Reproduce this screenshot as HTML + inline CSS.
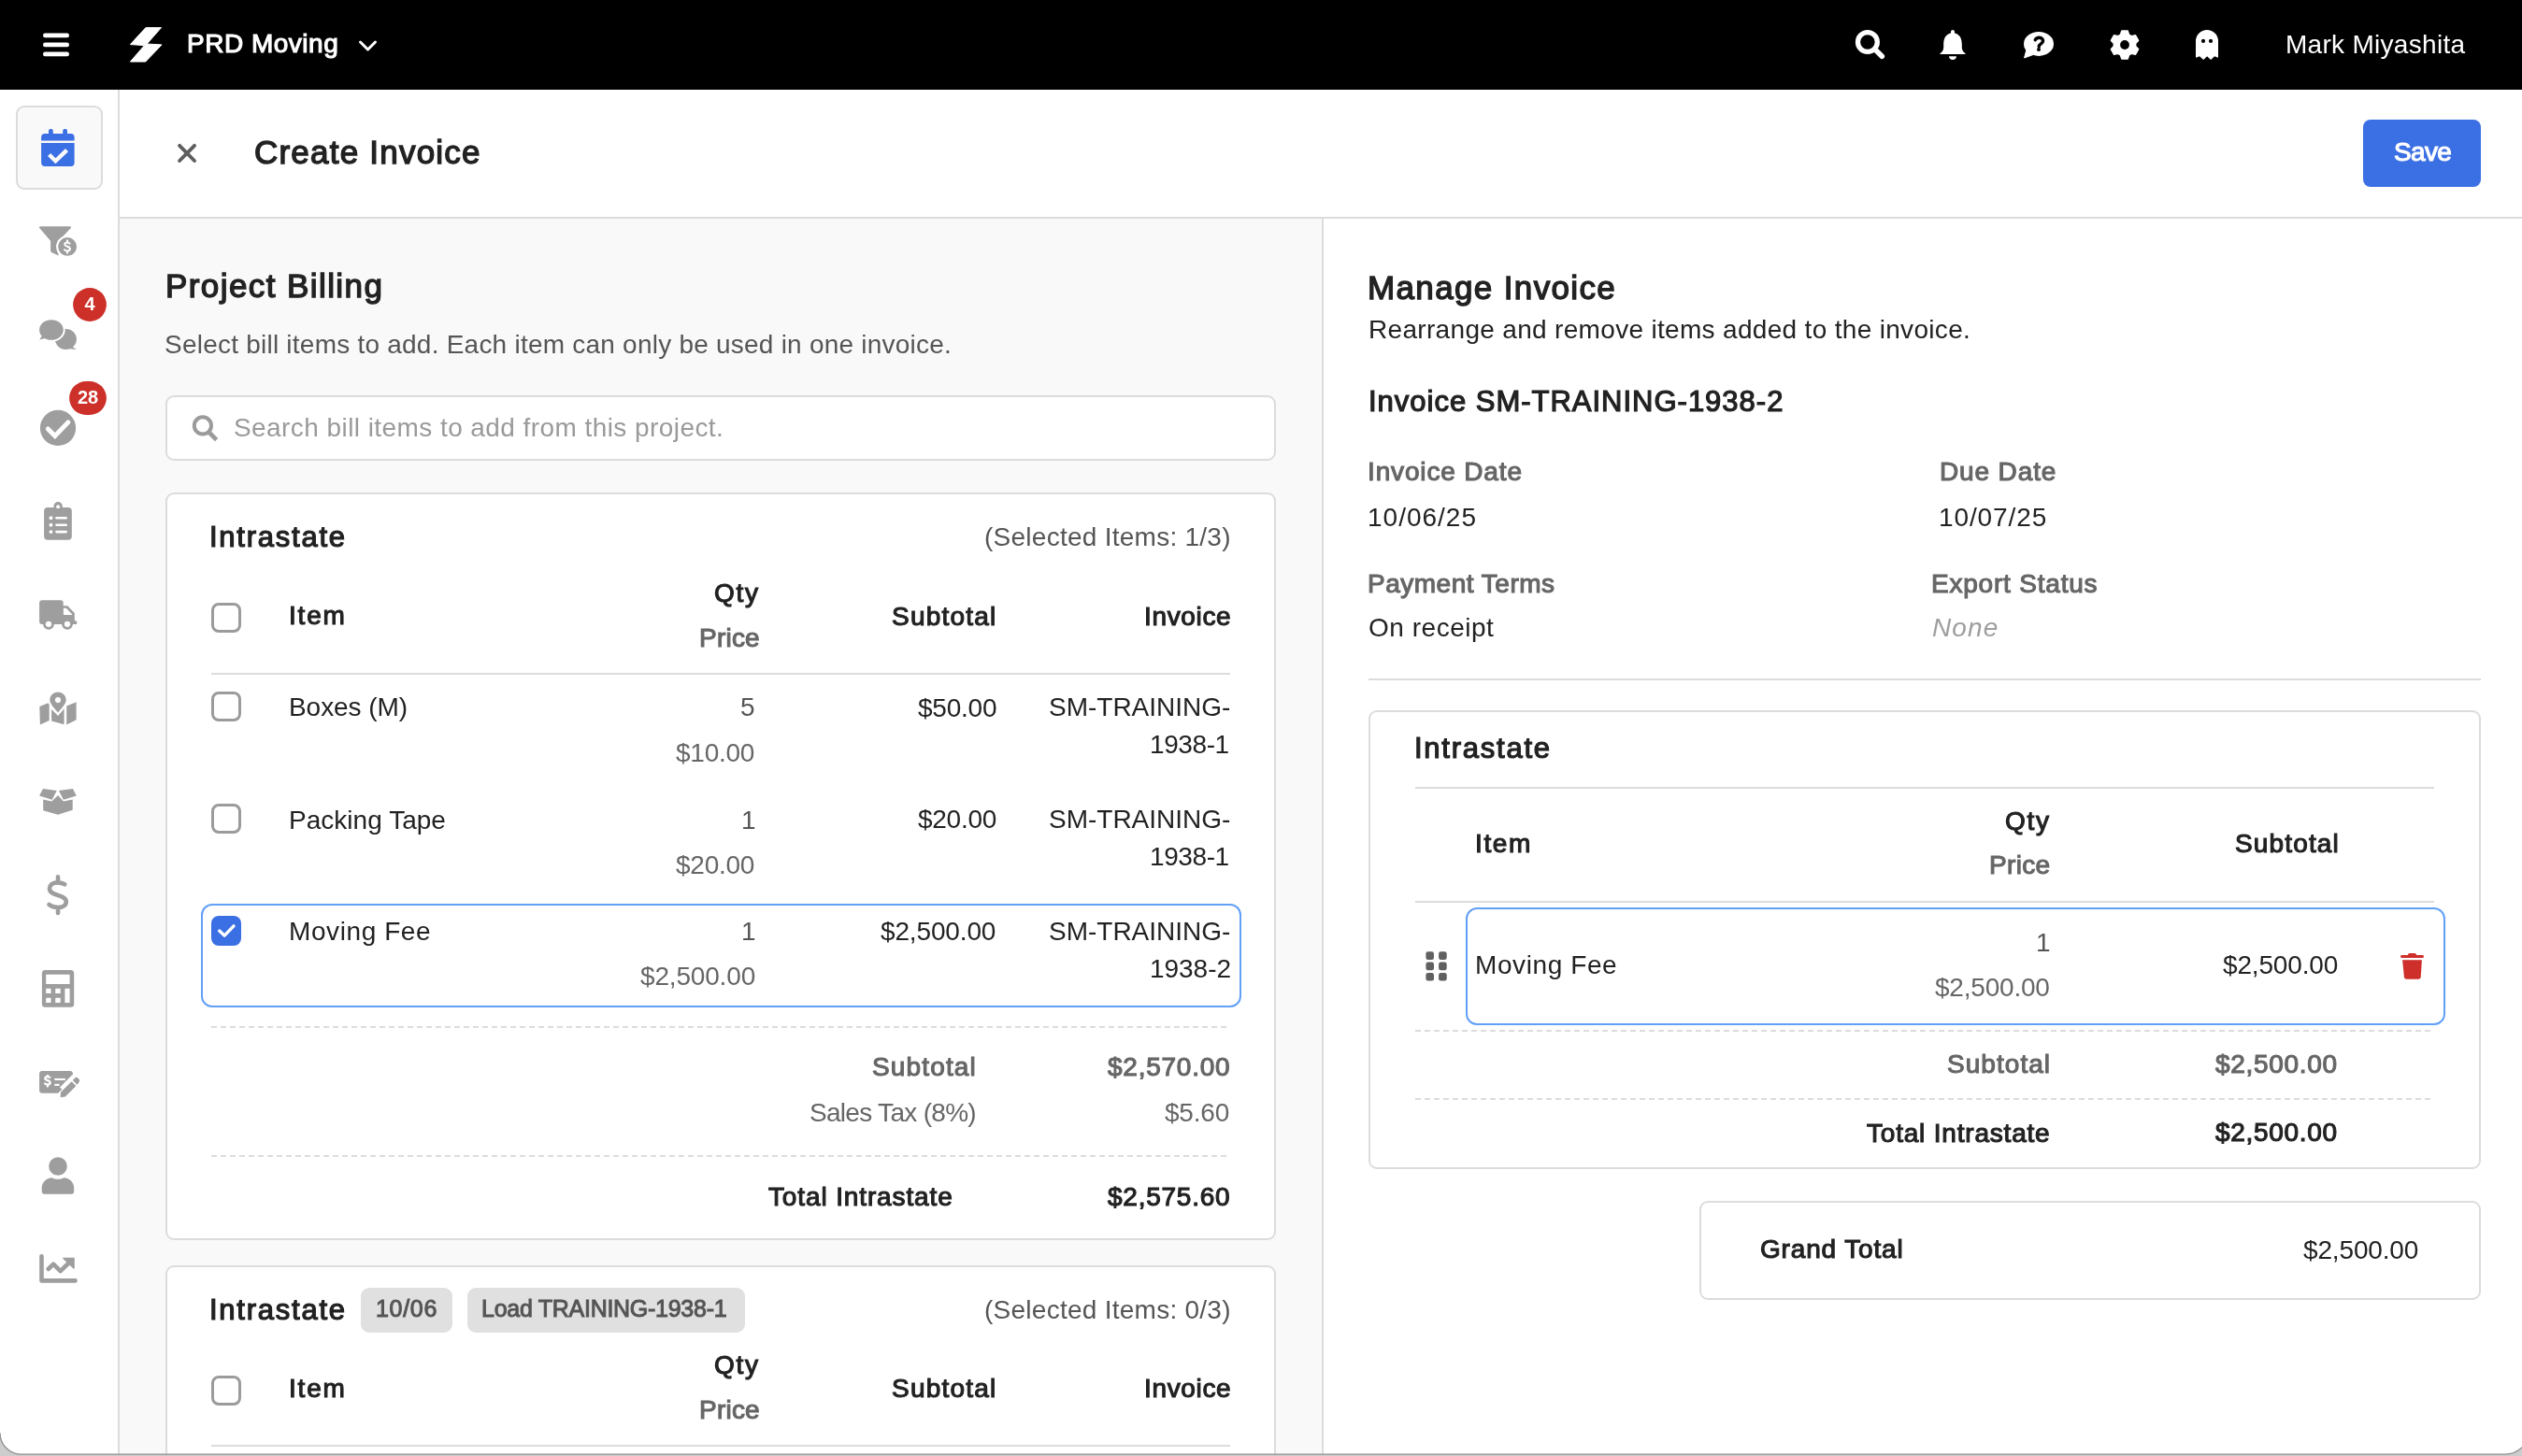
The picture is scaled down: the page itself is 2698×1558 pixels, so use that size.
<!DOCTYPE html>
<html><head><meta charset="utf-8"><style>
html,body{margin:0;padding:0;width:2698px;height:1558px;overflow:hidden;background:#fff;}
body{position:relative;font-family:"Liberation Sans",sans-serif;}
.t{position:absolute;white-space:nowrap;will-change:transform;}
svg{display:block}
</style></head><body>
<div style="position:absolute;left:0px;top:0px;width:2698px;height:96px;box-sizing:border-box;background:#000"></div>
<div style="position:absolute;left:0px;top:96px;width:128px;height:1462px;box-sizing:border-box;background:#fff;border-right:2px solid #dcdcdc"></div>
<div style="position:absolute;left:128px;top:96px;width:2570px;height:138px;box-sizing:border-box;background:#fff;border-bottom:2px solid #dcdcdc"></div>
<div style="position:absolute;left:128px;top:234px;width:1288px;height:1324px;box-sizing:border-box;background:#f9f9f9;border-right:2px solid #dcdcdc"></div>
<div style="position:absolute;left:1416px;top:234px;width:1282px;height:1324px;box-sizing:border-box;background:#fff"></div>
<div style="position:absolute;left:17px;top:113px;width:93px;height:90px;box-sizing:border-box;background:#f9f9f9;border:2px solid #dcdcdc;border-radius:9px"></div>
<div class="t" style="left:200.4px;top:32.8px;font-size:28px;line-height:28px;font-weight:400;font-style:normal;color:#fff;letter-spacing:0.51px;-webkit-text-stroke:1.12px #fff;">PRD Moving</div>
<div class="t" style="left:2444.5px;top:33.9px;font-size:28px;line-height:28px;font-weight:400;font-style:normal;color:#fff;letter-spacing:0.29px;">Mark Miyashita</div>
<div class="t" style="left:272.1px;top:144.7px;font-size:35px;line-height:35px;font-weight:400;font-style:normal;color:#222222;letter-spacing:1.22px;-webkit-text-stroke:1.4px #222222;">Create Invoice</div>
<div style="position:absolute;left:2528px;top:128px;width:126px;height:72px;box-sizing:border-box;background:#3b6fe4;border-radius:8px"></div>
<div class="t" style="left:2561.0px;top:149.1px;font-size:28px;line-height:28px;font-weight:400;font-style:normal;color:#fff;letter-spacing:-0.67px;-webkit-text-stroke:1.12px #fff;">Save</div>
<div class="t" style="left:176.6px;top:288.4px;font-size:35px;line-height:35px;font-weight:400;font-style:normal;color:#222222;letter-spacing:1.42px;-webkit-text-stroke:1.4px #222222;">Project Billing</div>
<div class="t" style="left:176.0px;top:355.3px;font-size:28px;line-height:28px;font-weight:400;font-style:normal;color:#555555;letter-spacing:0.23px;">Select bill items to add. Each item can only be used in one invoice.</div>
<div style="position:absolute;left:177px;top:423px;width:1188px;height:70px;box-sizing:border-box;background:#fff;border:2px solid #dcdcdc;border-radius:9px"></div>
<div class="t" style="left:250.0px;top:444.3px;font-size:28px;line-height:28px;font-weight:400;font-style:normal;color:#9a9a9a;letter-spacing:0.43px;">Search bill items to add from this project.</div>
<div style="position:absolute;left:177px;top:527px;width:1188px;height:800px;box-sizing:border-box;background:#fff;border:2px solid #dcdcdc;border-radius:9px"></div>
<div class="t" style="left:224.2px;top:559.4px;font-size:31px;line-height:31px;font-weight:400;font-style:normal;color:#222222;letter-spacing:1.76px;-webkit-text-stroke:1.24px #222222;">Intrastate</div>
<div class="t" style="left:1053.3px;top:561.1px;font-size:28px;line-height:28px;font-weight:400;font-style:normal;color:#555555;letter-spacing:0.26px;">(Selected Items: 1/3)</div>
<div style="position:absolute;left:226px;top:645px;width:32px;height:32px;box-sizing:border-box;background:#fff;border:3px solid #9b9b9b;border-radius:8px"></div>
<div class="t" style="left:308.6px;top:645.3px;font-size:28px;line-height:28px;font-weight:400;font-style:normal;color:#222222;letter-spacing:1.83px;-webkit-text-stroke:1.12px #222222;">Item</div>
<div class="t" style="left:764.1px;top:620.7px;font-size:28px;line-height:28px;font-weight:400;font-style:normal;color:#222222;letter-spacing:1.69px;-webkit-text-stroke:1.12px #222222;">Qty</div>
<div class="t" style="left:747.6px;top:668.7px;font-size:28px;line-height:28px;font-weight:400;font-style:normal;color:#666666;letter-spacing:0.22px;-webkit-text-stroke:1.12px #666666;">Price</div>
<div class="t" style="left:954.0px;top:645.5px;font-size:28px;line-height:28px;font-weight:400;font-style:normal;color:#222222;letter-spacing:1.20px;-webkit-text-stroke:1.12px #222222;">Subtotal</div>
<div class="t" style="left:1223.8px;top:645.5px;font-size:28px;line-height:28px;font-weight:400;font-style:normal;color:#222222;letter-spacing:0.65px;-webkit-text-stroke:1.12px #222222;">Invoice</div>
<div style="position:absolute;left:226px;top:720px;width:1090px;height:2px;box-sizing:border-box;background:#dcdcdc"></div>
<div class="t" style="left:308.7px;top:743.0px;font-size:28px;line-height:28px;font-weight:400;font-style:normal;color:#222222;letter-spacing:-0.06px;">Boxes (M)</div>
<div class="t" style="left:792.0px;top:743.0px;font-size:28px;line-height:28px;font-weight:400;font-style:normal;color:#555555;letter-spacing:0.00px;">5</div>
<div class="t" style="left:723.4px;top:791.6px;font-size:28px;line-height:28px;font-weight:400;font-style:normal;color:#666666;letter-spacing:-0.24px;">$10.00</div>
<div class="t" style="left:981.6px;top:743.5px;font-size:28px;line-height:28px;font-weight:400;font-style:normal;color:#222222;letter-spacing:-0.22px;">$50.00</div>
<div class="t" style="left:1122.3px;top:743.3px;font-size:28px;line-height:28px;font-weight:400;font-style:normal;color:#222222;letter-spacing:-0.01px;">SM-TRAINING-</div>
<div class="t" style="left:1229.6px;top:783.1px;font-size:28px;line-height:28px;font-weight:400;font-style:normal;color:#222222;letter-spacing:-0.40px;">1938-1</div>
<div style="position:absolute;left:226px;top:740px;width:32px;height:32px;box-sizing:border-box;background:#fff;border:3px solid #9b9b9b;border-radius:8px"></div>
<div class="t" style="left:308.7px;top:864.0px;font-size:28px;line-height:28px;font-weight:400;font-style:normal;color:#222222;letter-spacing:0.03px;">Packing Tape</div>
<div class="t" style="left:793.0px;top:864.0px;font-size:28px;line-height:28px;font-weight:400;font-style:normal;color:#555555;letter-spacing:0.00px;">1</div>
<div class="t" style="left:723.4px;top:911.5px;font-size:28px;line-height:28px;font-weight:400;font-style:normal;color:#666666;letter-spacing:-0.24px;">$20.00</div>
<div class="t" style="left:981.6px;top:863.2px;font-size:28px;line-height:28px;font-weight:400;font-style:normal;color:#222222;letter-spacing:-0.26px;">$20.00</div>
<div class="t" style="left:1122.3px;top:863.2px;font-size:28px;line-height:28px;font-weight:400;font-style:normal;color:#222222;letter-spacing:-0.01px;">SM-TRAINING-</div>
<div class="t" style="left:1229.6px;top:903.0px;font-size:28px;line-height:28px;font-weight:400;font-style:normal;color:#222222;letter-spacing:-0.40px;">1938-1</div>
<div style="position:absolute;left:226px;top:860px;width:32px;height:32px;box-sizing:border-box;background:#fff;border:3px solid #9b9b9b;border-radius:8px"></div>
<div style="position:absolute;left:215px;top:967px;width:1112.5px;height:110.5px;box-sizing:border-box;border:2px solid #62a0f6;border-radius:12px"></div>
<div class="t" style="left:308.7px;top:982.8px;font-size:28px;line-height:28px;font-weight:400;font-style:normal;color:#222222;letter-spacing:0.59px;">Moving Fee</div>
<div class="t" style="left:793.0px;top:982.8px;font-size:28px;line-height:28px;font-weight:400;font-style:normal;color:#555555;letter-spacing:0.00px;">1</div>
<div class="t" style="left:684.6px;top:1030.8px;font-size:28px;line-height:28px;font-weight:400;font-style:normal;color:#666666;letter-spacing:-0.17px;">$2,500.00</div>
<div class="t" style="left:942.4px;top:982.5px;font-size:28px;line-height:28px;font-weight:400;font-style:normal;color:#222222;letter-spacing:-0.14px;">$2,500.00</div>
<div class="t" style="left:1122.3px;top:982.5px;font-size:28px;line-height:28px;font-weight:400;font-style:normal;color:#222222;letter-spacing:-0.01px;">SM-TRAINING-</div>
<div class="t" style="left:1229.6px;top:1022.9px;font-size:28px;line-height:28px;font-weight:400;font-style:normal;color:#222222;letter-spacing:-0.04px;">1938-2</div>
<div style="position:absolute;left:226px;top:980px;width:32px;height:32px;box-sizing:border-box;background:#3b6fe4;border-radius:8px"></div>
<svg style="position:absolute;left:226px;top:980px" width="32" height="32"><polyline points="8.7,16.1 14.1,21.1 24,10.9" fill="none" stroke="#fff" stroke-width="3.4" stroke-linecap="round" stroke-linejoin="round"/></svg>
<svg style="position:absolute;left:226px;top:1098px" width="1090" height="2"><line x1="0" y1="1" x2="1090" y2="1" stroke="#dcdcdc" stroke-width="2" stroke-dasharray="6 4"/></svg>
<div class="t" style="left:933.0px;top:1128.3px;font-size:28px;line-height:28px;font-weight:400;font-style:normal;color:#666666;letter-spacing:1.15px;-webkit-text-stroke:1.12px #666666;">Subtotal</div>
<div class="t" style="left:1184.6px;top:1128.3px;font-size:28px;line-height:28px;font-weight:400;font-style:normal;color:#666666;letter-spacing:0.76px;-webkit-text-stroke:1.12px #666666;">$2,570.00</div>
<div class="t" style="left:865.7px;top:1177.2px;font-size:28px;line-height:28px;font-weight:400;font-style:normal;color:#666666;letter-spacing:-0.70px;">Sales Tax (8%)</div>
<div class="t" style="left:1246.0px;top:1177.2px;font-size:28px;line-height:28px;font-weight:400;font-style:normal;color:#666666;letter-spacing:-0.20px;">$5.60</div>
<svg style="position:absolute;left:226px;top:1236px" width="1090" height="2"><line x1="0" y1="1" x2="1090" y2="1" stroke="#dcdcdc" stroke-width="2" stroke-dasharray="6 4"/></svg>
<div class="t" style="left:821.8px;top:1266.5px;font-size:28px;line-height:28px;font-weight:400;font-style:normal;color:#222222;letter-spacing:0.87px;-webkit-text-stroke:1.12px #222222;">Total Intrastate</div>
<div class="t" style="left:1184.6px;top:1266.5px;font-size:28px;line-height:28px;font-weight:400;font-style:normal;color:#222222;letter-spacing:0.76px;-webkit-text-stroke:1.12px #222222;">$2,575.60</div>
<div style="position:absolute;left:177px;top:1354px;width:1188px;height:246px;box-sizing:border-box;background:#fff;border:2px solid #dcdcdc;border-radius:9px"></div>
<div class="t" style="left:224.2px;top:1385.8px;font-size:31px;line-height:31px;font-weight:400;font-style:normal;color:#222222;letter-spacing:1.76px;-webkit-text-stroke:1.24px #222222;">Intrastate</div>
<div class="t" style="left:1053.3px;top:1387.5px;font-size:28px;line-height:28px;font-weight:400;font-style:normal;color:#555555;letter-spacing:0.26px;">(Selected Items: 0/3)</div>
<div style="position:absolute;left:226px;top:1472px;width:32px;height:32px;box-sizing:border-box;background:#fff;border:3px solid #9b9b9b;border-radius:8px"></div>
<div class="t" style="left:308.6px;top:1471.7px;font-size:28px;line-height:28px;font-weight:400;font-style:normal;color:#222222;letter-spacing:1.83px;-webkit-text-stroke:1.12px #222222;">Item</div>
<div class="t" style="left:764.1px;top:1447.1px;font-size:28px;line-height:28px;font-weight:400;font-style:normal;color:#222222;letter-spacing:1.69px;-webkit-text-stroke:1.12px #222222;">Qty</div>
<div class="t" style="left:747.6px;top:1495.1px;font-size:28px;line-height:28px;font-weight:400;font-style:normal;color:#666666;letter-spacing:0.22px;-webkit-text-stroke:1.12px #666666;">Price</div>
<div class="t" style="left:954.0px;top:1471.9px;font-size:28px;line-height:28px;font-weight:400;font-style:normal;color:#222222;letter-spacing:1.20px;-webkit-text-stroke:1.12px #222222;">Subtotal</div>
<div class="t" style="left:1223.8px;top:1471.9px;font-size:28px;line-height:28px;font-weight:400;font-style:normal;color:#222222;letter-spacing:0.65px;-webkit-text-stroke:1.12px #222222;">Invoice</div>
<div style="position:absolute;left:226px;top:1546px;width:1090px;height:2px;box-sizing:border-box;background:#dcdcdc"></div>
<div style="position:absolute;left:386px;top:1378px;width:98px;height:48px;box-sizing:border-box;background:#e0e0e0;border-radius:9px"></div>
<div class="t" style="left:401.9px;top:1388.0px;font-size:25px;line-height:25px;font-weight:400;font-style:normal;color:#555555;letter-spacing:0.70px;-webkit-text-stroke:1.0px #555555;">10/06</div>
<div style="position:absolute;left:500px;top:1378px;width:297px;height:48px;box-sizing:border-box;background:#e0e0e0;border-radius:9px"></div>
<div class="t" style="left:515.1px;top:1388.0px;font-size:25px;line-height:25px;font-weight:400;font-style:normal;color:#555555;letter-spacing:-0.27px;-webkit-text-stroke:1.0px #555555;">Load TRAINING-1938-1</div>
<div class="t" style="left:1463.3px;top:289.7px;font-size:35px;line-height:35px;font-weight:400;font-style:normal;color:#222222;letter-spacing:1.36px;-webkit-text-stroke:1.4px #222222;">Manage Invoice</div>
<div class="t" style="left:1464.0px;top:339.1px;font-size:28px;line-height:28px;font-weight:400;font-style:normal;color:#222222;letter-spacing:0.32px;">Rearrange and remove items added to the invoice.</div>
<div class="t" style="left:1463.6px;top:413.5px;font-size:31px;line-height:31px;font-weight:400;font-style:normal;color:#222222;letter-spacing:0.99px;-webkit-text-stroke:1.24px #222222;">Invoice SM-TRAINING-1938-2</div>
<div class="t" style="left:1463.3px;top:491.2px;font-size:28px;line-height:28px;font-weight:400;font-style:normal;color:#666666;letter-spacing:0.85px;-webkit-text-stroke:1.12px #666666;">Invoice Date</div>
<div class="t" style="left:1463.0px;top:539.7px;font-size:28px;line-height:28px;font-weight:400;font-style:normal;color:#222222;letter-spacing:1.00px;">10/06/25</div>
<div class="t" style="left:2074.6px;top:491.2px;font-size:28px;line-height:28px;font-weight:400;font-style:normal;color:#666666;letter-spacing:0.87px;-webkit-text-stroke:1.12px #666666;">Due Date</div>
<div class="t" style="left:2074.0px;top:539.7px;font-size:28px;line-height:28px;font-weight:400;font-style:normal;color:#222222;letter-spacing:0.90px;">10/07/25</div>
<div class="t" style="left:1463.3px;top:611.1px;font-size:28px;line-height:28px;font-weight:400;font-style:normal;color:#666666;letter-spacing:0.51px;-webkit-text-stroke:1.12px #666666;">Payment Terms</div>
<div class="t" style="left:2066.0px;top:610.9px;font-size:28px;line-height:28px;font-weight:400;font-style:normal;color:#666666;letter-spacing:0.79px;-webkit-text-stroke:1.12px #666666;">Export Status</div>
<div class="t" style="left:1464.0px;top:658.3px;font-size:28px;line-height:28px;font-weight:400;font-style:normal;color:#222222;letter-spacing:0.52px;">On receipt</div>
<div class="t" style="left:2067.0px;top:658.3px;font-size:28px;line-height:28px;font-weight:400;font-style:italic;color:#9e9e9e;letter-spacing:1.10px;">None</div>
<div style="position:absolute;left:1464px;top:726px;width:1190px;height:2px;box-sizing:border-box;background:#dcdcdc"></div>
<div style="position:absolute;left:1464px;top:760px;width:1190px;height:491px;box-sizing:border-box;background:#fff;border:2px solid #dcdcdc;border-radius:9px"></div>
<div class="t" style="left:1512.8px;top:785.4px;font-size:31px;line-height:31px;font-weight:400;font-style:normal;color:#222222;letter-spacing:1.76px;-webkit-text-stroke:1.24px #222222;">Intrastate</div>
<div style="position:absolute;left:1514px;top:842px;width:1090px;height:2px;box-sizing:border-box;background:#dcdcdc"></div>
<div class="t" style="left:1577.6px;top:888.6px;font-size:28px;line-height:28px;font-weight:400;font-style:normal;color:#222222;letter-spacing:1.63px;-webkit-text-stroke:1.12px #222222;">Item</div>
<div class="t" style="left:2144.6px;top:864.7px;font-size:28px;line-height:28px;font-weight:400;font-style:normal;color:#222222;letter-spacing:1.74px;-webkit-text-stroke:1.12px #222222;">Qty</div>
<div class="t" style="left:2128.4px;top:912.4px;font-size:28px;line-height:28px;font-weight:400;font-style:normal;color:#666666;letter-spacing:0.32px;-webkit-text-stroke:1.12px #666666;">Price</div>
<div class="t" style="left:2390.6px;top:888.5px;font-size:28px;line-height:28px;font-weight:400;font-style:normal;color:#222222;letter-spacing:1.15px;-webkit-text-stroke:1.12px #222222;">Subtotal</div>
<div style="position:absolute;left:1514px;top:964px;width:1090px;height:2px;box-sizing:border-box;background:#dcdcdc"></div>
<div style="position:absolute;left:1567.5px;top:970.5px;width:1048.0px;height:126.5px;box-sizing:border-box;border:2px solid #62a0f6;border-radius:12px"></div>
<div class="t" style="left:1577.6px;top:1019.3px;font-size:28px;line-height:28px;font-weight:400;font-style:normal;color:#222222;letter-spacing:0.60px;">Moving Fee</div>
<div class="t" style="left:2178.0px;top:995.3px;font-size:28px;line-height:28px;font-weight:400;font-style:normal;color:#555555;letter-spacing:0.00px;">1</div>
<div class="t" style="left:2069.7px;top:1043.0px;font-size:28px;line-height:28px;font-weight:400;font-style:normal;color:#666666;letter-spacing:-0.21px;">$2,500.00</div>
<div class="t" style="left:2377.5px;top:1019.1px;font-size:28px;line-height:28px;font-weight:400;font-style:normal;color:#222222;letter-spacing:-0.16px;">$2,500.00</div>
<svg style="position:absolute;left:1514px;top:1102px" width="1090" height="2"><line x1="0" y1="1" x2="1090" y2="1" stroke="#dcdcdc" stroke-width="2" stroke-dasharray="6 4"/></svg>
<div class="t" style="left:2082.9px;top:1125.3px;font-size:28px;line-height:28px;font-weight:400;font-style:normal;color:#666666;letter-spacing:1.05px;-webkit-text-stroke:1.12px #666666;">Subtotal</div>
<div class="t" style="left:2370.2px;top:1125.1px;font-size:28px;line-height:28px;font-weight:400;font-style:normal;color:#666666;letter-spacing:0.68px;-webkit-text-stroke:1.12px #666666;">$2,500.00</div>
<svg style="position:absolute;left:1514px;top:1175px" width="1090" height="2"><line x1="0" y1="1" x2="1090" y2="1" stroke="#dcdcdc" stroke-width="2" stroke-dasharray="6 4"/></svg>
<div class="t" style="left:1997.3px;top:1198.9px;font-size:28px;line-height:28px;font-weight:400;font-style:normal;color:#222222;letter-spacing:0.80px;-webkit-text-stroke:1.12px #222222;">Total Intrastate</div>
<div class="t" style="left:2370.2px;top:1198.3px;font-size:28px;line-height:28px;font-weight:400;font-style:normal;color:#222222;letter-spacing:0.68px;-webkit-text-stroke:1.12px #222222;">$2,500.00</div>
<div style="position:absolute;left:1818px;top:1285px;width:836px;height:106px;box-sizing:border-box;background:#fff;border:2px solid #dcdcdc;border-radius:9px"></div>
<div class="t" style="left:1883.1px;top:1323.3px;font-size:28px;line-height:28px;font-weight:400;font-style:normal;color:#222222;letter-spacing:0.84px;-webkit-text-stroke:1.12px #222222;">Grand Total</div>
<div class="t" style="left:2463.9px;top:1323.5px;font-size:28px;line-height:28px;font-weight:400;font-style:normal;color:#222222;letter-spacing:-0.15px;">$2,500.00</div>
<svg style="position:absolute;left:0;top:0" width="420" height="96"><rect x="46" y="35.6" width="28" height="4.6" rx="2.3" fill="#ffffff"/><rect x="46" y="45.6" width="28" height="4.6" rx="2.3" fill="#ffffff"/><rect x="46" y="55.6" width="28" height="4.6" rx="2.3" fill="#ffffff"/><path d="M155.9 29.6 L172.5 29.6 L157.2 47 L173 47.9 L155.7 66 L139.4 66 L154.5 48.6 L139.4 47.6 Z" fill="#ffffff" stroke="#ffffff" stroke-width="1" stroke-linejoin="round"/><polyline points="385.5,45 393.5,53 401.5,45" fill="none" stroke="#ffffff" stroke-width="3" stroke-linecap="round" stroke-linejoin="round"/></svg>
<svg style="position:absolute;left:1960px;top:20px" width="440" height="60"><circle cx="37.9" cy="25" r="10.4" fill="none" stroke="#ffffff" stroke-width="5.3"/><line x1="46.5" y1="33.5" x2="53.3" y2="40.3" stroke="#ffffff" stroke-width="5.6" stroke-linecap="round"/><path d="M129 11.9 C127.9 11.9 127 12.8 127 13.9 V15.6 C121.4 16.6 119.2 21.6 119.2 27.4 V30.6 C119.2 33.4 118 35.6 115.6 37.2 C114.8 37.8 115.1 38.1 116 38.1 H142 C142.9 38.1 143.2 37.8 142.4 37.2 C140 35.6 138.8 33.4 138.8 30.6 V27.4 C138.8 21.6 136.6 16.6 131 15.6 V13.9 C131 12.8 130.1 11.9 129 11.9 Z" fill="#ffffff"/><path d="M125 40.3 h8 c0 2.1 -1.8 3.7 -4 3.7 s-4 -1.6 -4 -3.7 z" fill="#ffffff"/><ellipse cx="221" cy="26.9" rx="16" ry="13" fill="#ffffff"/><path d="M208 33 L205.5 42 L215 38.5 Z" fill="#ffffff" stroke="#ffffff" stroke-width="1" stroke-linejoin="round"/><path d="M217.2 22.8 c0.8 -1.7 2.2 -2.6 4.1 -2.6 c2.5 0 4.3 1.5 4.3 3.6 c0 2.9 -4.3 3.1 -4.3 5.8 v0.4" fill="none" stroke="#000" stroke-width="3.4" stroke-linecap="round" stroke-linejoin="round"/><circle cx="221" cy="32.9" r="2" fill="#000"/><path d="M308.40 17.13 L309.79 12.94 L316.21 12.94 L317.60 17.13 L320.11 18.59 L324.44 17.69 L327.65 23.25 L324.71 26.55 L324.71 29.45 L327.65 32.75 L324.44 38.31 L320.11 37.41 L317.60 38.87 L316.21 43.06 L309.79 43.06 L308.40 38.87 L305.89 37.41 L301.56 38.31 L298.35 32.75 L301.29 29.45 L301.29 26.55 L298.35 23.25 L301.56 17.69 L305.89 18.59 Z" fill="#ffffff" stroke="#ffffff" stroke-width="1.4" stroke-linejoin="round"/><circle cx="313" cy="28" r="4.9" fill="#000"/><path d="M389 24 a12 12 0 0 1 24 0 V41.8 L409.1 40.2 L405.1 44.1 L401.1 40.3 L397.2 44.1 L393.1 40.2 L389 41.8 Z" fill="#ffffff"/><circle cx="397" cy="23.9" r="2.1" fill="#000"/><circle cx="405" cy="23.9" r="2.1" fill="#000"/></svg>
<svg style="position:absolute;left:185px;top:150px" width="30" height="30"><path d="M7.1 5.9 L23 22 M23 5.9 L7.1 22" stroke="#5e5e5e" stroke-width="3.9" stroke-linecap="round"/></svg>
<svg style="position:absolute;left:200px;top:440px" width="40" height="36"><circle cx="16.9" cy="15.4" r="9.1" fill="none" stroke="#9b9b9b" stroke-width="4"/><line x1="22.5" y1="21.5" x2="31.6" y2="30.6" stroke="#9b9b9b" stroke-width="4.6"/></svg>
<svg style="position:absolute;left:0;top:0" width="126" height="1400"><path d="M44.1 147 a4 4 0 0 1 4 -4 h27.5 a4 4 0 0 1 4 4 v3.6 h-35.5z" fill="#3b6fe4"/><path d="M44.1 153 h35.5 v21 a4 4 0 0 1 -4 4 h-27.5 a4 4 0 0 1 -4 -4z" fill="#3b6fe4"/><rect x="52" y="137.9" width="4.8" height="7" rx="2" fill="#3b6fe4"/><rect x="67.2" y="137.9" width="4.8" height="7" rx="2" fill="#3b6fe4"/><polyline points="52.6,165.5 59.4,172.3 71.5,160.6" fill="none" stroke="#fafafa" stroke-width="4.3" stroke-linejoin="miter"/><path d="M43 242.2 H75 c0.9 0 1.4 1.1 0.8 1.8 L62.5 258 V273.5 L55.5 270.2 c-0.9 -0.5 -1.4 -1.3 -1.4 -2.3 V257.7 L42.2 244 c-0.6 -0.7 -0.1 -1.8 0.8 -1.8z" fill="#9e9e9e"/><circle cx="72.1" cy="263.9" r="12" fill="#fff"/><circle cx="72.1" cy="263.9" r="9.9" fill="#9e9e9e"/><path d="M74.6 260.6 c-0.8 -0.8 -1.7 -1.1 -2.6 -1.1 c-1.6 0 -2.7 0.9 -2.7 2.1 c0 2.8 5.6 1.6 5.6 4.6 c0 1.3 -1.2 2.2 -2.9 2.2 c-1.1 0 -2.2 -0.4 -3 -1.2 M72 257.3 v2.2 M72 268.4 v2.3" fill="none" stroke="#fff" stroke-width="2" stroke-linecap="round"/><ellipse cx="70.4" cy="363" rx="11.5" ry="11" fill="#9e9e9e"/><path d="M76 370 L81.8 374 L73 373z" fill="#9e9e9e"/><ellipse cx="54.9" cy="353" rx="14.8" ry="12.8" fill="#fff"/><ellipse cx="54.9" cy="353" rx="12.8" ry="10.8" fill="#9e9e9e"/><path d="M45.5 358.5 L42.2 363.6 L50 361.5z" fill="#9e9e9e"/><circle cx="96" cy="326" r="17.9" fill="#cc3029"/><text x="96" y="332.2" font-family="Liberation Sans" font-weight="700" font-size="20" fill="#fff" text-anchor="middle">4</text><circle cx="62" cy="457.9" r="19.1" fill="#9e9e9e"/><polyline points="51.3,458.9 58.8,466.4 72.9,451.9" fill="none" stroke="#fff" stroke-width="4.9" stroke-linecap="round" stroke-linejoin="miter"/><rect x="74.1" y="408.1" width="39.8" height="35.8" rx="17.9" fill="#cc3029"/><text x="94" y="432.2" font-family="Liberation Sans" font-weight="700" font-size="20" fill="#fff" text-anchor="middle">28</text><rect x="47.1" y="542.9" width="29.7" height="34.9" rx="4" fill="#9e9e9e"/><circle cx="62.1" cy="541.8" r="4.7" fill="#9e9e9e"/><circle cx="62.1" cy="542.2" r="2" fill="#fff"/><circle cx="54.5" cy="554.3" r="1.95" fill="#fff"/><rect x="59.2" y="553.0" width="12.8" height="2.6" rx="1.3" fill="#fff"/><circle cx="54.5" cy="561.7" r="1.95" fill="#fff"/><rect x="59.2" y="560.4000000000001" width="12.8" height="2.6" rx="1.3" fill="#fff"/><circle cx="54.5" cy="569.1" r="1.95" fill="#fff"/><rect x="59.2" y="567.8000000000001" width="12.8" height="2.6" rx="1.3" fill="#fff"/><path d="M42.1 645.2 a3 3 0 0 1 3 -3 h19.6 a3 3 0 0 1 3 3 v3.1 h4.6 l7.5 7.8 v8.2 h0.8 a1.9 1.9 0 0 1 0 3.8 h-35.5 a3 3 0 0 1 -3 -3z" fill="#9e9e9e"/><path d="M67.9 650.7 h3 l6.3 6.9 v0.5 h-9.3z" fill="#fff"/><circle cx="52" cy="667.8" r="5.9" fill="#9e9e9e"/><circle cx="52" cy="667.8" r="3.15" fill="#fff"/><circle cx="72" cy="667.8" r="5.9" fill="#9e9e9e"/><circle cx="72" cy="667.8" r="3.15" fill="#fff"/><path d="M42.3 756 L51.6 752.2 L52.7 754 V771.1 L42.9 775.6 Z" fill="#9e9e9e"/><path d="M55.1 759.1 L62.1 766 L68.6 758.3 V775.2 L55.1 771.5 Z" fill="#9e9e9e"/><path d="M71.2 755.4 L81.6 751.3 V770.2 L71.2 775.6 Z" fill="#9e9e9e"/><path d="M62 738.4 c-5.9 0 -10.7 4.6 -10.7 10.5 c0 4.6 5 10 10.7 15.9 c5.7 -5.9 10.7 -11.3 10.7 -15.9 c0 -5.9 -4.8 -10.5 -10.7 -10.5z" fill="#fff"/><path d="M62 740.4 c-4.8 0 -8.7 3.8 -8.7 8.6 c0 3.8 4.2 8.3 8.7 13.4 c4.5 -5.1 8.7 -9.6 8.7 -13.4 c0 -4.8 -3.9 -8.6 -8.7 -8.6z" fill="#9e9e9e"/><circle cx="62" cy="749.1" r="3.06" fill="#fff"/><path d="M46 844.1 L60.7 845.9 L55.7 855.7 L42.1 851.5z" fill="#9e9e9e"/><path d="M62.9 846.1 L77.9 844.1 L81.8 851.5 L67.9 855.7z" fill="#9e9e9e"/><path d="M46.2 855.4 L55.3 857.6 L62 850.9 L67.9 857.6 L77.7 855.6 V866.7 L62 871.7 L46.2 867.2z" fill="#9e9e9e"/><path d="M69.2 946.3 C66 944.5 63.5 944.3 61 944.4 C56 944.6 53 947.2 53 950.8 C53 955 57 956.5 62 958 C67 959.5 70.8 961 70.8 965 C70.8 969 66.5 971 62 971 C58.5 971 55 970 52.5 968 M62 938.3 V944.3 M62 971 V977" fill="none" stroke="#9e9e9e" stroke-width="4.6" stroke-linecap="round"/><rect x="44.9" y="1038.1" width="34.3" height="39.7" rx="3.5" fill="#9e9e9e"/><rect x="49.2" y="1042.8" width="25.4" height="10.3" rx="0.6" fill="#fff"/><rect x="49.2" y="1057.8" width="5.3" height="5.2" rx="0.6" fill="#fff"/><rect x="49.2" y="1067.8" width="5.3" height="5.2" rx="0.6" fill="#fff"/><rect x="59.2" y="1057.8" width="5.5" height="5.2" rx="0.6" fill="#fff"/><rect x="59.2" y="1067.8" width="5.5" height="5.2" rx="0.6" fill="#fff"/><rect x="69.4" y="1057.8" width="5.2" height="15.2" rx="0.6" fill="#fff"/><path d="M45.1 1146.1 h29.8 a3 3 0 0 1 3 3 v6 L62 1169.8 h-16.9 a3 3 0 0 1 -3 -3 v-17.7 a3 3 0 0 1 3 -3z" fill="#9e9e9e"/><path d="M53.3 1153 c-0.6 -0.6 -1.5 -0.9 -2.4 -0.9 c-1.5 0 -2.6 0.8 -2.6 2 c0 2.7 5.3 1.5 5.3 4.4 c0 1.2 -1.1 2 -2.7 2 c-1 0 -2 -0.3 -2.8 -1 M50.9 1150.9 v1.5 M50.9 1160.5 v2" fill="none" stroke="#fff" stroke-width="2.3" stroke-linecap="round"/><rect x="58.3" y="1153.9" width="11.5" height="2.1" fill="#fff"/><rect x="58.3" y="1159.8" width="5.3" height="2.1" fill="#fff"/><path d="M64 1163.4 L77.4 1150 L84.6 1157.2 L71.2 1170.6 Z" fill="#fff"/><path d="M65 1168.8 L76.6 1157.2 L81.4 1162 L69.8 1173.6 L64.6 1174.3 Z" fill="#9e9e9e"/><path d="M77.8 1156 L80.2 1153.6 a2.2 2.2 0 0 1 3.1 0 L84.5 1154.8 a2.2 2.2 0 0 1 0 3.1 L82.6 1160.8 Z" fill="#9e9e9e"/><circle cx="62" cy="1248" r="9.8" fill="#9e9e9e"/><path d="M44.7 1274.8 v-3.6 c0 -6 4.9 -11 11 -11 c2 1 4 1.5 6.3 1.5 s4.3 -0.5 6.3 -1.5 c6.1 0 10.9 5 10.9 11 v3.6 a3 3 0 0 1 -3 3 h-28.5 a3 3 0 0 1 -3 -3z" fill="#9e9e9e"/><path d="M44.5 1344.2 V1370.4 H80.5" fill="none" stroke="#9e9e9e" stroke-width="4.6" stroke-linecap="round" stroke-linejoin="round"/><polyline points="51.6,1358 57.1,1352.6 64.6,1360.2 73.5,1351.5" fill="none" stroke="#9e9e9e" stroke-width="4.6" stroke-linecap="round" stroke-linejoin="round"/><path d="M67.9 1346.5 H79 V1357 Z" fill="#9e9e9e" stroke="#9e9e9e" stroke-width="1.5" stroke-linejoin="round"/></svg>
<svg style="position:absolute;left:1520px;top:1014px" width="34" height="40"><rect x="5.4" y="4.3" width="8.6" height="8.7" rx="2.3" fill="#606060"/><rect x="5.4" y="15.6" width="8.6" height="8.7" rx="2.3" fill="#606060"/><rect x="5.4" y="26.9" width="8.6" height="8.7" rx="2.3" fill="#606060"/><rect x="19.1" y="4.3" width="8.6" height="8.7" rx="2.3" fill="#606060"/><rect x="19.1" y="15.6" width="8.6" height="8.7" rx="2.3" fill="#606060"/><rect x="19.1" y="26.9" width="8.6" height="8.7" rx="2.3" fill="#606060"/></svg>
<svg style="position:absolute;left:2560px;top:1012px" width="40" height="44"><rect x="8.2" y="9.9" width="24.6" height="3" rx="1" fill="#cf2f2a"/><path d="M15.4 10.5 L16.6 8.6 c0.2 -0.4 0.6 -0.6 1 -0.6 h5.8 c0.4 0 0.8 0.2 1 0.6 L25.6 10.5 Z" fill="#cf2f2a"/><path d="M10.1 15.2 H30.9 L29.7 33.6 c-0.1 1.3 -1.1 2.2 -2.4 2.2 H14.3 c-1.3 0 -2.3 -0.9 -2.4 -2.2 Z" fill="#cf2f2a"/></svg>
<svg style="position:absolute;left:0;top:1528px" width="2698" height="30"><path d="M0 5.2 A23 23 0 0 0 23 28.2 H2679.8 A25.7 25.7 0 0 0 2698 20.7 V30 H0 Z" fill="#cdcdcd"/><path d="M0 5.2 A23 23 0 0 0 23 28.2 H2679.8 A25.7 25.7 0 0 0 2698 20.7" fill="none" stroke="#8f8f8f" stroke-width="1.3"/></svg>
</body></html>
